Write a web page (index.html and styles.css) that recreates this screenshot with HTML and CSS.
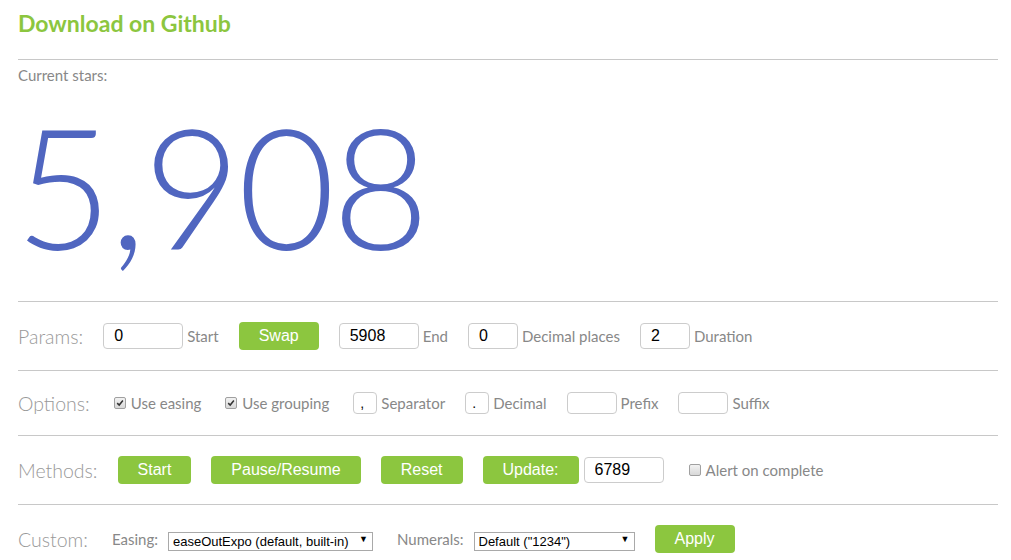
FILE: index.html
```html
<!DOCTYPE html>
<html>
<head>
<meta charset="utf-8">
<link rel="stylesheet" href="styles.css">
</head>
<body>
<div class="page">
  <h1 class="title">Download on Github</h1>
  <hr class="rule">
  <div class="stars-label">Current stars:</div>
  <div class="stars-wrap"><div class="stars">5,908</div></div>
  <hr class="rule">
  <div class="row">
    <span class="section">Params:</span>
    <input class="field w80" type="text" value="0">
    <span class="lbl">Start</span>
    <button class="btn">Swap</button>
    <input class="field w80" type="text" value="5908">
    <span class="lbl">End</span>
    <input class="field w50" type="text" value="0">
    <span class="lbl">Decimal places</span>
    <input class="field w50" type="text" value="2">
    <span class="lbl">Duration</span>
  </div>
  <hr class="rule">
  <div class="row row-sm">
    <span class="section">Options:</span>
    <label class="check first"><span class="cb on"><svg viewBox="0 0 10 10" width="8" height="8"><path d="M1.5 5.2 L4 7.6 L8.6 2" fill="none" stroke="#333" stroke-width="1.9"/></svg></span><span class="lbl">Use easing</span></label>
    <label class="check"><span class="cb on"><svg viewBox="0 0 10 10" width="8" height="8"><path d="M1.5 5.2 L4 7.6 L8.6 2" fill="none" stroke="#333" stroke-width="1.9"/></svg></span><span class="lbl">Use grouping</span></label>
    <input class="field small w24" type="text" value=",">
    <span class="lbl">Separator</span>
    <input class="field small w24" type="text" value=".">
    <span class="lbl">Decimal</span>
    <input class="field small w50" type="text" value="">
    <span class="lbl">Prefix</span>
    <input class="field small w50" type="text" value="">
    <span class="lbl">Suffix</span>
  </div>
  <hr class="rule">
  <div class="row">
    <span class="section">Methods:</span>
    <button class="btn">Start</button>
    <button class="btn">Pause/Resume</button>
    <button class="btn">Reset</button>
    <button class="btn btn-update">Update:</button>
    <input class="field w80 tight" type="text" value="6789">
    <label class="check alert"><span class="cb"></span><span class="lbl">Alert on complete</span></label>
  </div>
  <hr class="rule">
  <div class="row">
    <span class="section">Custom:</span>
    <span class="lbl lbl-sel">Easing:</span>
    <span class="sel w205"><select><option>easeOutExpo (default, built-in)</option></select></span>
    <span class="lbl lbl-sel">Numerals:</span>
    <span class="sel w161"><select><option>Default ("1234")</option></select></span>
    <button class="btn">Apply</button>
  </div>
</div>
</body>
</html>
```
FILE: styles.css
```css
html, body {
  margin: 0;
  padding: 0;
  background: #fff;
}
.page {
  width: 980px;
  padding-left: 18px;
  font-family: Lato, "Liberation Sans", sans-serif;
  color: #888;
}
.title {
  margin: 0;
  padding-top: 9px;
  height: 50px;
  box-sizing: border-box;
  font-size: 23px;
  line-height: 28px;
  font-weight: 700;
  color: #8cc63f;
}
.rule {
  margin: 0;
  border: 0;
  border-top: 1px solid #c8c8c8;
  height: 0;
}
.rule:first-of-type { margin-top: 9px; }
.stars-label {
  font-size: 15px;
  line-height: 18px;
  margin-top: 6px;
  color: #888;
}
.stars-wrap {
  height: 217px;
}
.stars {
  font-size: 168px;
  font-weight: 300;
  line-height: 202px;
  margin-left: -3px;
  color: #5066c0;
  letter-spacing: -3px;
}
.row {
  display: flex;
  align-items: center;
  height: 68px;
}
.row-sm { height: 64px; }
.section {
  font-size: 19.5px;
  font-weight: 300;
  color: #999;
  margin-right: 20px;
}
.lbl {
  font-size: 15px;
  color: #888;
  margin-left: 4px;
  margin-right: 20px;
}
.field {
  box-sizing: border-box;
  height: 26px;
  border: 1px solid #ccc;
  border-radius: 4px;
  padding: 0 10px;
  font-family: "Liberation Sans", Arial, sans-serif;
  font-size: 16px;
  color: #000;
  outline: none;
}
.field.small {
  height: 22px;
  padding: 0 6px;
  font-size: 14px;
}
.w80 { width: 80px; }
.w50 { width: 50px; }
.w24 { width: 24px; }
.tight { margin-left: 5px; }
.btn {
  box-sizing: border-box;
  height: 28px;
  border: 0;
  border-radius: 4px;
  background: #8cc63f;
  color: #fff;
  font-family: "Liberation Sans", Arial, sans-serif;
  font-size: 16px;
  padding: 0 20px;
  margin-right: 20px;
}
.btn-update { margin-right: 0; }
.check {
  display: flex;
  align-items: center;
}
.check.first { margin-left: 4px; }
.cb {
  box-sizing: border-box;
  width: 12px;
  height: 12px;
  border: 1px solid #a0a0a0;
  border-radius: 2px;
  background: linear-gradient(#f2f2f2, #d8d8d8);
  display: flex;
  align-items: center;
  justify-content: center;
}
.cb svg { display: block; }
.check .lbl { margin-left: 5px; margin-right: 24px; }
.alert { margin-left: 25px; }
.lbl-sel { margin-right: 10px; }
.sel {
  position: relative;
  display: inline-block;
  height: 19px;
  margin-right: 20px;
}
.sel select {
  appearance: none;
  -webkit-appearance: none;
  box-sizing: border-box;
  width: 100%;
  height: 19px;
  border: 1px solid #a9a9a9;
  border-radius: 0;
  background: #fff;
  font-family: "Liberation Sans", Arial, sans-serif;
  font-size: 13px;
  color: #000;
  padding: 0 4px;
  line-height: 17px;
}
.sel::after {
  content: "\25BC";
  position: absolute;
  right: 5px;
  top: 3px;
  font-size: 9px;
  color: #000;
  pointer-events: none;
}
.w205 { width: 205px; }
.w161 { width: 161px; }
```
